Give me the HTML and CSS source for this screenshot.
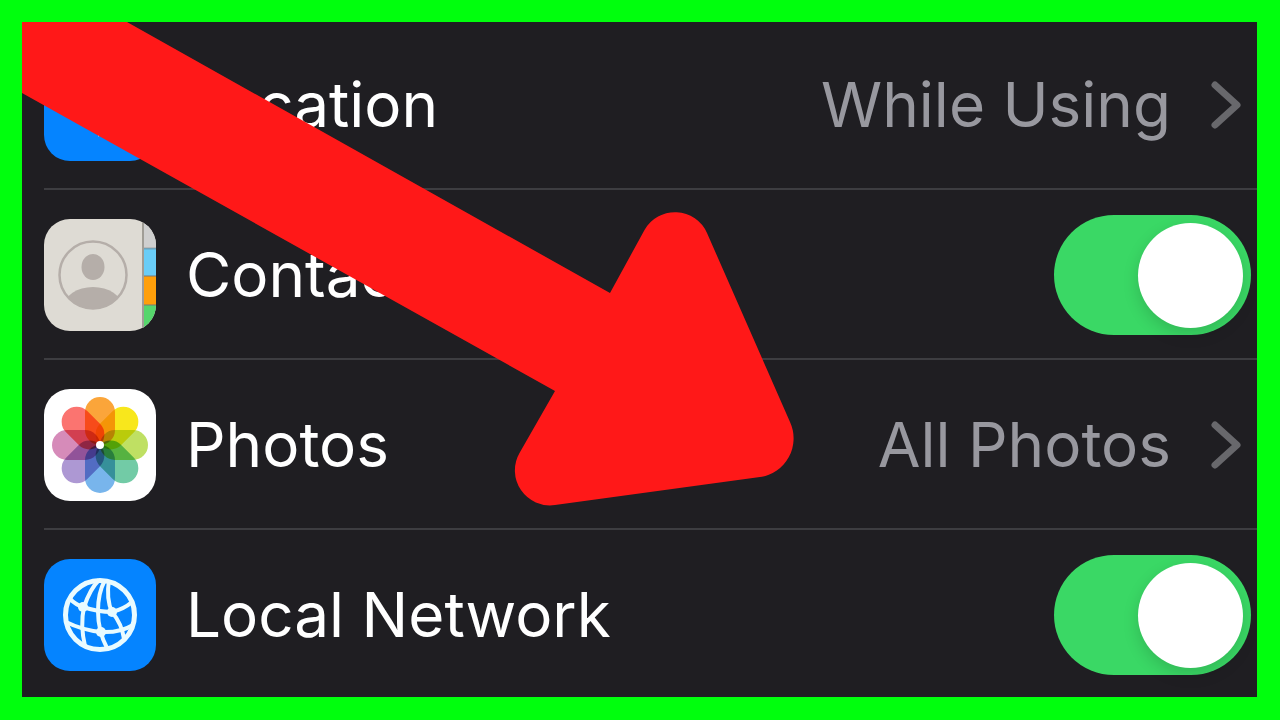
FILE: index.html
```
<!DOCTYPE html>
<html lang="en">
<head>
    <meta charset="UTF-8">
    <title>App Permissions</title>
    <link rel="stylesheet" href="styles.css">
</head>
<body>
    <main class="panel">
        <a class="row" href="#location">
            <svg class="icon" viewBox="0 0 112 112" aria-hidden="true">
                <rect width="112" height="112" rx="26" fill="#0584ff"/>
                <path d="M87 25 L22 55 H54 V88 Z" fill="#fff"/>
            </svg>
            <span class="name">Location</span>
            <span class="value">While Using</span>
            <svg class="chevron" viewBox="0 0 30 48" aria-hidden="true"><path d="M4 4 L26 24 L4 44"/></svg>
        </a>

        <div class="row">
            <svg class="icon" viewBox="0 0 112 112" aria-hidden="true">
                <clipPath id="iconShape"><rect width="112" height="112" rx="26"/></clipPath>
                <clipPath id="avatarShape"><circle cx="49" cy="56" r="34"/></clipPath>
                <g clip-path="url(#iconShape)">
                    <rect width="112" height="112" fill="#dedbd4"/>
                    <rect x="99" width="13" height="29" fill="#cfcfcf"/>
                    <rect x="99" y="29" width="13" height="28" fill="#69cdf8"/>
                    <rect x="99" y="57" width="13" height="29" fill="#ff9f0a"/>
                    <rect x="99" y="86" width="13" height="26" fill="#56d66c"/>
                    <path d="M99 29.5 H112 M99 57 H112 M99 86 H112" stroke="#777" stroke-opacity="0.5" stroke-width="2"/>
                    <path d="M99 0 V112" stroke="#a09d96" stroke-width="2"/>
                    <g clip-path="url(#avatarShape)" fill="#b5aea9">
                        <ellipse cx="49" cy="48" rx="11.5" ry="13"/>
                        <ellipse cx="49" cy="88" rx="29" ry="20"/>
                    </g>
                    <circle cx="49" cy="56" r="33.5" fill="none" stroke="#b5aea9" stroke-width="2.5"/>
                </g>
            </svg>
            <label class="name" for="contacts">Contacts</label>
            <input class="toggle" type="checkbox" id="contacts" checked>
        </div>

        <a class="row" href="#photos">
            <svg class="icon" viewBox="0 0 112 112" aria-hidden="true">
                <rect width="112" height="112" rx="26" fill="#fff"/>
                <g class="petals">
                    <rect x="41" y="8" width="30" height="48" rx="15" fill="#fba53a"/>
                    <rect x="41" y="8" width="30" height="48" rx="15" fill="#f8e71c" transform="rotate(45 56 56)"/>
                    <rect x="41" y="8" width="30" height="48" rx="15" fill="#bfe063" transform="rotate(90 56 56)"/>
                    <rect x="41" y="8" width="30" height="48" rx="15" fill="#72cba6" transform="rotate(135 56 56)"/>
                    <rect x="41" y="8" width="30" height="48" rx="15" fill="#78b5ec" transform="rotate(180 56 56)"/>
                    <rect x="41" y="8" width="30" height="48" rx="15" fill="#ad98d3" transform="rotate(225 56 56)"/>
                    <rect x="41" y="8" width="30" height="48" rx="15" fill="#d68bb9" transform="rotate(270 56 56)"/>
                    <rect x="41" y="8" width="30" height="48" rx="15" fill="#fb7470" transform="rotate(315 56 56)"/>
                </g>
                <circle cx="56" cy="56" r="4" fill="#fff"/>
            </svg>
            <span class="name">Photos</span>
            <span class="value">All Photos</span>
            <svg class="chevron" viewBox="0 0 30 48" aria-hidden="true"><path d="M4 4 L26 24 L4 44"/></svg>
        </a>

        <div class="row">
            <svg class="icon" viewBox="0 0 112 112" aria-hidden="true">
                <rect width="112" height="112" rx="26" fill="#0584ff"/>
                <g fill="none" stroke="#e9fbff" stroke-width="4">
                    <circle cx="56" cy="56" r="34.5" stroke-width="5"/>
                    <path d="M55 21 Q46 30 40 48 Q36 66 41 87"/>
                    <path d="M61 21 Q54 34 54 52 Q54 72 63 89"/>
                    <path d="M65 21 Q62 40 68 53 Q78 65 80 80"/>
                    <path d="M25 39 Q32 46 39 48 Q54 53 68 53 Q80 50 88 43"/>
                    <path d="M22 63 Q38 71 57 73 Q76 74 89 66"/>
                </g>
                <g fill="#e9fbff">
                    <circle cx="39" cy="48" r="5"/>
                    <circle cx="68" cy="53" r="5"/>
                    <circle cx="57" cy="73" r="5"/>
                </g>
            </svg>
            <label class="name" for="localNetwork">Local Network</label>
            <input class="toggle" type="checkbox" id="localNetwork" checked>
        </div>

        <!-- Arrow pointing at the Photos setting -->
        <svg class="arrow" viewBox="0 0 772 484" aria-hidden="true">
            <path d="M0 0 H105 L588 271 L622.500 208 A35 35 0 0 1 685 211 L768 400 A39 39 0 0 1 738 455 L533 483 A35 35 0 0 1 497.500 431 L533 369 L0 71 Z"/>
        </svg>
    </main>
</body>
</html>
```

FILE: styles.css
```
* {
    box-sizing: border-box;
}

body {
    margin: 0;
    min-height: 100vh;
    padding: 22px 23px 23px 22px;
    background-color: #00ff0d;
    font-family: Inter, "Liberation Sans", sans-serif;
    display: flex;
}

.panel {
    position: relative;
    flex: 1;
    overflow: hidden;
    background-color: #1f1e22;
    padding-left: 22px;
}

.row {
    display: flex;
    align-items: center;
    padding: 25px 6px 23px 0;
    border-top: 2px solid #3d3d41;
    color: #ffffff;
    font-size: 62px;
    line-height: 120px;
    text-decoration: none;
}

.row:first-child {
    border-top: none;
    padding-top: 23px;
}

.row:nth-child(4) {
    padding-bottom: 22px;
}

.icon {
    width: 112px;
    height: 112px;
    margin-right: 30px;
    flex-shrink: 0;
}

.petals rect {
    mix-blend-mode: multiply;
}

.name {
    flex: 1;
    white-space: nowrap;
}

.value {
    color: #98989f;
    white-space: nowrap;
}

.chevron {
    width: 30px;
    height: 48px;
    margin: 0 10px 0 40px;
    flex-shrink: 0;
    fill: none;
    stroke: #68686c;
    stroke-width: 7px;
    stroke-linecap: round;
    stroke-linejoin: round;
}

.toggle {
    appearance: none;
    display: flex;
    align-items: center;
    width: 197px;
    height: 120px;
    margin: 0;
    padding: 0 8px;
    border-radius: 60px;
    background-color: #5b5b60;
    flex-shrink: 0;
    cursor: pointer;
}

.toggle::before {
    content: "";
    width: 105px;
    height: 105px;
    border-radius: 50%;
    background-color: #ffffff;
    box-shadow: 0 6px 16px rgba(0, 0, 0, 0.15);
}

.toggle:checked {
    justify-content: flex-end;
    background-color: #3ad865;
}

.arrow {
    position: absolute;
    top: 0;
    left: 0;
    width: 772px;
    height: 484px;
    fill: #ff1818;
    pointer-events: none;
}
```
